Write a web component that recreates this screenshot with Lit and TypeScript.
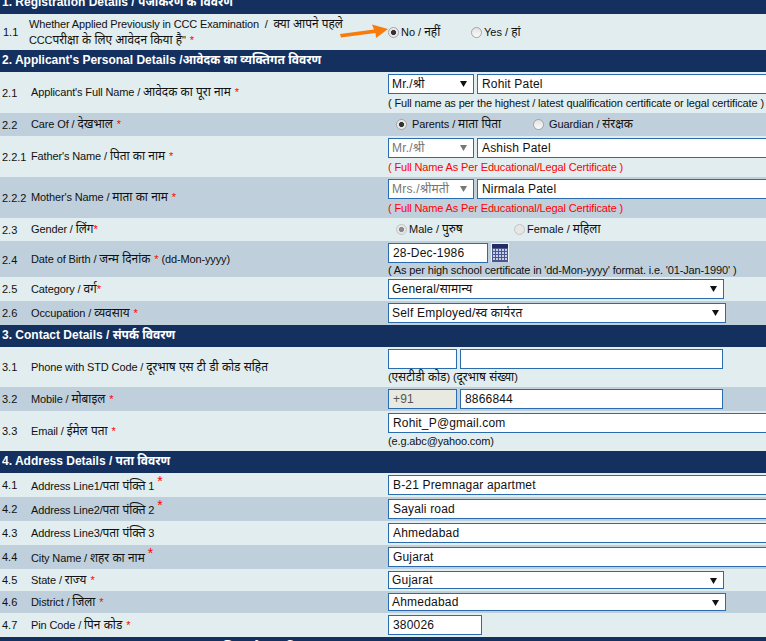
import { LitElement, html, svg, css, nothing } from "lit";
import { customElement } from "lit/decorators.js";

const req = html`<span class="req">*</span>`;

/** Devanagari runs render a little larger than the Latin text around them. */
const hi = (s: string) =>
  s
    .split(/([\u0900-\u097F]+(?:\s+[\u0900-\u097F]+)*)/)
    .map((p, i) => (i % 2 ? html`<span class="hi">${p}</span>` : p));

@customElement("app-root")
export class AppRoot extends LitElement {
  static styles = css`
    :host {
      display: block;
      width: 766px;
      height: 641px;
      overflow: hidden;
      position: relative;
      background: #e1edee;
      font-family: "Liberation Sans", "Noto Sans", "Noto Sans Devanagari", Arial, sans-serif;
      font-size: 11px;
      color: #111;
    }
    .hi { font-size: 1.08em; letter-spacing: 0; line-height: 1; }
    .form { margin-top: -8px; width: 1100px; }
    .head {
      height: 22px;
      line-height: 21px;
      background: #14305f;
      color: #fff;
      font-weight: 700;
      font-size: 12px;
      padding-left: 2px;
      white-space: nowrap;
    }
    .head.last { height: 30px; padding-left: 214px; line-height: 22px; }
    .row {
      display: grid;
      grid-template-columns: 388px 1fr;
      background: #e1edee;
    }
    .row.alt { background: #bfcfdc; }
    .h22 { height: 22px; }
    .h23 { height: 23px; }
    .h24 { height: 24px; }
    .h36 { height: 36px; }
    .h40 { height: 40px; }
    .h41 { height: 41px; }
    .label {
      display: flex;
      align-items: center;
      white-space: nowrap;
      letter-spacing: -0.13px;
    }
    .num { width: 29px; padding-left: 2px; flex: none; box-sizing: content-box; letter-spacing: 0; }
    .plain .num { width: 28px; padding-left: 3px; }
    .req { color: #f00; margin-left: 1px; }
    .req.tight { margin-left: 0; }
    .req.up { font-size: 14px; position: relative; top: -4px; margin-left: 3px; }
    .wrap {
      white-space: pre-wrap;
      width: 320px;
      line-height: 15.5px;
      margin-left: -2px;
      padding-top: 1px;
      letter-spacing: -0.15px;
    }
    .ctl { padding-top: 2px; display: flex; flex-direction: column; }
    .ctl.mid { padding-top: 0; justify-content: center; }
    .line { display: flex; gap: 3px; align-items: flex-start; height: 20px; }
    .hint {
      font-size: 11px;
      line-height: 19px;
      white-space: nowrap;
      color: #111;
      letter-spacing: -0.14px;
    }
    .hint.small { line-height: 15px; }
    .hint.mid { line-height: 17px; }
    .hint.red { color: #f00; }
    input[type="text"], select {
      box-sizing: border-box;
      height: 20px;
      border: 1px solid #2a6cae;
      background: #fff;
      font: 12px "Liberation Sans", "Noto Sans", sans-serif;
      letter-spacing: 0.17px;
      color: #111;
      padding: 0 4px;
      margin: 0;
      border-radius: 0;
      outline: none;
    }
    input.wide { width: 400px; }
    input.w100 { width: 100px; }
    input.w69 { width: 69px; }
    input.w263 { width: 263px; }
    input.w94 { width: 94px; }
    input.ro { background: #e8e9e1; color: #555; }
    .sel { position: relative; display: block; flex: none; }
    .sel select {
      appearance: none;
      -webkit-appearance: none;
      display: block;
      width: 100%;
      padding: 0 3px;
      letter-spacing: 0.2px;
    }
    .sel.s18 select { height: 18px; }
    .sel.off select { color: #777; }
    .sel svg { position: absolute; right: 7px; top: 7px; width: 7px; height: 6px; fill: #111; }
    .sel.off svg { fill: #777; }
    .s86 { width: 86px; }
    .s337 { width: 336px; }
    .s338 { width: 338px; }
    .radios { display: flex; height: 20px; align-items: center; }
    .radio { display: inline-flex; align-items: center; white-space: nowrap; }
    input[type="radio"] {
      appearance: none;
      -webkit-appearance: none;
      box-sizing: border-box;
      width: 11px;
      height: 11px;
      margin: 0;
      border-radius: 50%;
      border: 1px solid #a4a4a4;
      background: linear-gradient(#e2e2e2, #fbfbfb);
      flex: none;
    }
    input[type="radio"]:checked {
      background: radial-gradient(circle, #333 0 2.2px, #e6e6e6 2.9px, #f4f4f4 100%);
    }
    input[type="radio"].dim { border-color: #c4c4c4; background: #e6e6e6; }
    input[type="radio"].dim:checked {
      background: radial-gradient(circle, #8a8a8a 0 2.2px, #e6e6e6 2.9px);
    }
    .r1 { gap: 2px; width: 83px; }
    .r2 { margin-left: 8px; gap: 5px; width: 137px; letter-spacing: -0.1px; }
    .r3 { margin-left: 8px; gap: 2px; width: 118px; }
    .r4 { gap: 2px; }
    .r5 { gap: 5px; letter-spacing: -0.1px; }
    .cal {
      width: 18px;
      height: 20px;
      display: block;
      flex: none;
    }
    .arrow {
      position: absolute;
      left: 338px;
      top: 20px;
      width: 54px;
      height: 22px;
      overflow: visible;
      pointer-events: none;
    }
  `;

  private sel(text: string, cls: string) {
    return html`<span class="sel ${cls}">
      <select><option>${text}</option></select>
      <svg viewBox="0 0 7 6"><path d="M0 0h7L3.5 6z"></path></svg>
    </span>`;
  }

  private label(num: string, text: string, star: unknown = req) {
    return html`<div class="label"><span class="num">${num}</span><span>${hi(text)}${star}</span></div>`;
  }

  private radio(cls: string, name: string, text: string, checked = false, dim = false) {
    return html`<label class="radio ${cls}"
      ><input class=${dim ? "dim" : ""} type="radio" name=${name} ?checked=${checked} /><span>${hi(text)}</span></label
    >`;
  }

  render() {
    const up = html`<span class="req up">*</span>`;
    const tight = html`<span class="req tight">*</span>`;
    return html`
      <div class="form">
        <div class="head">1. Registration Details / पंजीकरण के विवरण</div>
        <div class="row h36">
          <div class="label plain"><span class="num">1.1</span><span class="wrap">${hi(`Whether Applied Previously in CCC Examination  /  क्या आपने पहले CCCपरीक्षा के लिए आवेदन किया है" `)}${req}</span></div>
          <div class="ctl mid"><div class="radios">
            ${this.radio("r1", "a", "No / नहीं", true)}
            ${this.radio("r4", "a", "Yes / हां")}
          </div></div>
        </div>

        <div class="head">2. Applicant's Personal Details /आवेदक का व्यक्तिगत विवरण</div>
        <div class="row h41">
          ${this.label("2.1", "Applicant's Full Name / आवेदक का पूरा नाम ")}
          <div class="ctl">
            <div class="line">${this.sel("Mr./श्री", "s86")}<input class="wide" type="text" value="Rohit Patel" /></div>
            <div class="hint">( Full name as per the highest / latest qualification certificate or legal certificate )</div>
          </div>
        </div>
        <div class="row alt h23">
          ${this.label("2.2", "Care Of / देखभाल ")}
          <div class="ctl mid"><div class="radios">
            ${this.radio("r2", "b", "Parents / माता पिता", true)}
            ${this.radio("r5", "b", "Guardian / संरक्षक")}
          </div></div>
        </div>
        <div class="row h41">
          ${this.label("2.2.1", "Father's Name / पिता का नाम ")}
          <div class="ctl">
            <div class="line">${this.sel("Mr./श्री", "s86 off")}<input class="wide" type="text" value="Ashish Patel" /></div>
            <div class="hint red">( Full Name As Per Educational/Legal Certificate )</div>
          </div>
        </div>
        <div class="row alt h41">
          ${this.label("2.2.2", "Mother's Name / माता का नाम ")}
          <div class="ctl">
            <div class="line">${this.sel("Mrs./श्रीमती", "s86 off")}<input class="wide" type="text" value="Nirmala Patel" /></div>
            <div class="hint red">( Full Name As Per Educational/Legal Certificate )</div>
          </div>
        </div>
        <div class="row h23">
          ${this.label("2.3", "Gender / लिंग", tight)}
          <div class="ctl mid"><div class="radios">
            ${this.radio("r3", "c", "Male / पुरुष", true, true)}
            ${this.radio("r4", "c", "Female / महिला", false, true)}
          </div></div>
        </div>
        <div class="row alt h36">
          <div class="label"><span class="num">2.4</span><span>${hi("Date of Birth / जन्म दिनांक ")}${req} (dd-Mon-yyyy)</span></div>
          <div class="ctl">
            <div class="line">
              <input class="w100" type="text" value="28-Dec-1986" />
              <svg class="cal" viewBox="0 0 18 20">
                <rect x="0" y="0" width="18" height="19" fill="#eef3f6"></rect>
                <rect x="1" y="1" width="16" height="18" fill="#4a5690"></rect>
                <rect x="1" y="1" width="16" height="4" fill="#222c63"></rect>
                ${[6, 9, 12, 15].map((y) =>
                  [2, 5, 8, 11, 14].map(
                    (x) => svg`<rect x=${x} y=${y} width="2" height="2" fill="#c9cfe6"></rect>`
                  )
                )}
              </svg>
            </div>
            <div class="hint small">( As per high school certificate in 'dd-Mon-yyyy' format. i.e. '01-Jan-1990' )</div>
          </div>
        </div>
        <div class="row h24">
          ${this.label("2.5", "Category / वर्ग", tight)}
          <div class="ctl"><div class="line">${this.sel("General/सामान्य", "s337")}</div></div>
        </div>
        <div class="row alt h24">
          ${this.label("2.6", "Occupation / व्यवसाय ")}
          <div class="ctl"><div class="line">${this.sel("Self Employed/स्व कार्यरत", "s338")}</div></div>
        </div>

        <div class="head">3. Contact Details / संपर्क विवरण</div>
        <div class="row h40">
          ${this.label("3.1", "Phone with STD Code / दूरभाष एस टी डी कोड सहित", nothing)}
          <div class="ctl">
            <div class="line"><input class="w69" type="text" /><input class="w263" type="text" /></div>
            <div class="hint mid">${hi("(एसटीडी कोड) (दूरभाष संख्या)")}</div>
          </div>
        </div>
        <div class="row alt h24">
          ${this.label("3.2", "Mobile / मोबाइल ")}
          <div class="ctl"><div class="line"><input class="w69 ro" type="text" value="+91" readonly /><input class="w263" type="text" value="8866844" /></div></div>
        </div>
        <div class="row h40">
          ${this.label("3.3", "Email / ईमेल पता ")}
          <div class="ctl">
            <div class="line"><input class="wide" type="text" value="Rohit_P@gmail.com" /></div>
            <div class="hint mid">(e.g.abc@yahoo.com)</div>
          </div>
        </div>

        <div class="head">4. Address Details / पता विवरण</div>
        <div class="row h24">
          ${this.label("4.1", "Address Line1/पता पंक्ति 1", up)}
          <div class="ctl"><div class="line"><input class="wide" type="text" value="B-21 Premnagar apartmet" /></div></div>
        </div>
        <div class="row alt h24">
          ${this.label("4.2", "Address Line2/पता पंक्ति 2", up)}
          <div class="ctl"><div class="line"><input class="wide" type="text" value="Sayali road" /></div></div>
        </div>
        <div class="row h24">
          ${this.label("4.3", "Address Line3/पता पंक्ति 3", nothing)}
          <div class="ctl"><div class="line"><input class="wide" type="text" value="Ahmedabad" /></div></div>
        </div>
        <div class="row alt h24">
          ${this.label("4.4", "City Name / शहर का नाम", up)}
          <div class="ctl"><div class="line"><input class="wide" type="text" value="Gujarat" /></div></div>
        </div>
        <div class="row h22">
          ${this.label("4.5", "State / राज्य ")}
          <div class="ctl"><div class="line">${this.sel("Gujarat", "s337 s18")}</div></div>
        </div>
        <div class="row alt h22">
          ${this.label("4.6", "District / जिला ")}
          <div class="ctl"><div class="line">${this.sel("Ahmedabad", "s338 s18")}</div></div>
        </div>
        <div class="row h24">
          ${this.label("4.7", "Pin Code / पिन कोड ")}
          <div class="ctl"><div class="line"><input class="w94" type="text" value="380026" /></div></div>
        </div>
        <div class="head last">शैक्षिक योग्यता विवरण</div>
      </div>
      <svg class="arrow" viewBox="0 0 54 22">
        <path d="M2 14 L36 9.5 L34 4.5 L50 9 L38 18 L37.5 13 L3 17.5 z" fill="#f97b0c"></path>
      </svg>
    `;
  }
}
